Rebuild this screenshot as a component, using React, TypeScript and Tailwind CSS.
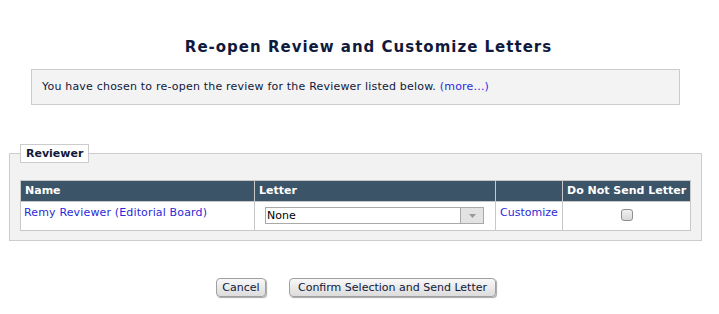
import React from "react";

export default function App() {
  const font = { fontFamily: '"DejaVu Sans", Verdana, sans-serif' };
  return (
    <div className="w-[719px] h-[314px] bg-white text-[#10183a]" style={font}>
      <div className="pt-[38px] pl-[18px] text-center text-[15px] font-bold leading-[18px] tracking-[1px] text-[#0f1a3c]">
        Re-open Review and Customize Letters
      </div>
      <div className="ml-[31px] mt-[13px] w-[649px] h-[36px] border border-[#cccccc] bg-[#f3f3f3] flex items-center pl-[10px] text-[11px] tracking-[0.2px]">
        <span>
          You have chosen to re-open the review for the Reviewer listed below.{" "}
          <span className="text-[#2a2ae0]">(more...)</span>
        </span>
      </div>
      <fieldset className="ml-[9px] mt-[39px] w-[692px] h-[97px] border border-[#cccccc] bg-[#f2f2f2] px-[10px] pt-[17px]">
        <legend className="-mt-[1px] border border-[#cccccc] bg-white px-[5px] h-[19px] text-[11px] font-bold leading-[17px]">
          Reviewer
        </legend>
        <table className="w-[670px] border-collapse text-[11px] bg-white table-fixed">
          <colgroup>
            <col className="w-[234px]" />
            <col className="w-[241px]" />
            <col className="w-[67px]" />
            <col className="w-[128px]" />
          </colgroup>
          <thead>
            <tr className="h-[21px] bg-[#3b5467] text-white font-bold text-left">
              <th className="border border-[#c8c8c8] px-[4px] py-0 text-left">Name</th>
              <th className="border border-[#c8c8c8] px-[4px] py-0 text-left">Letter</th>
              <th className="border border-[#c8c8c8] px-[4px] py-0"></th>
              <th className="border border-[#c8c8c8] px-[4px] py-0 text-left whitespace-nowrap">Do Not Send Letter</th>
            </tr>
          </thead>
          <tbody>
            <tr className="h-[29px]">
              <td className="border border-[#c8c8c8] px-[3px] pt-[3px] align-top text-[#2a2ad8] tracking-[0.15px]">
                Remy Reviewer (Editorial Board)
              </td>
              <td className="border border-[#c8c8c8] pl-[10px] align-top pt-[5px]">
                <div className="w-[219px] h-[17px] border border-[#a9a9a9] flex bg-white">
                  <div className="flex-1 pl-[1px] text-[11px] leading-[15px] text-black">None</div>
                  <div className="w-[23px] h-full bg-[#e3e3e3] border-l border-[#a9a9a9] flex items-center justify-center">
                    <svg width="7" height="4" viewBox="0 0 7 4">
                      <path d="M0 0 L7 0 L3.5 4 Z" fill="#999" />
                    </svg>
                  </div>
                </div>
              </td>
              <td className="border border-[#c8c8c8] pl-[4px] pt-[3px] align-top text-[#2a2ad8]">Customize</td>
              <td className="border border-[#c8c8c8] align-top pt-[7px]">
                <div className="mx-auto w-[12px] h-[12px] rounded-[3px] border border-[#8f8f8f] bg-gradient-to-b from-[#f0f0f0] to-[#d8d8d8]" />
              </td>
            </tr>
          </tbody>
        </table>
      </fieldset>
      <div className="mt-[37px] flex pl-[216px] gap-[23px]">
        <button className="h-[19px] w-[50px] rounded-[4px] border border-[#a0a0a0] bg-gradient-to-b from-[#f8f8f8] to-[#dcdcdc] shadow-[1px_1px_1px_rgba(0,0,0,0.35)] text-[11px] leading-[17px] text-[#10183a]">
          Cancel
        </button>
        <button className="h-[19px] w-[207px] rounded-[4px] border border-[#a0a0a0] bg-gradient-to-b from-[#f8f8f8] to-[#dcdcdc] shadow-[1px_1px_1px_rgba(0,0,0,0.35)] text-[11px] leading-[17px] text-[#10183a]">
          Confirm Selection and Send Letter
        </button>
      </div>
    </div>
  );
}
